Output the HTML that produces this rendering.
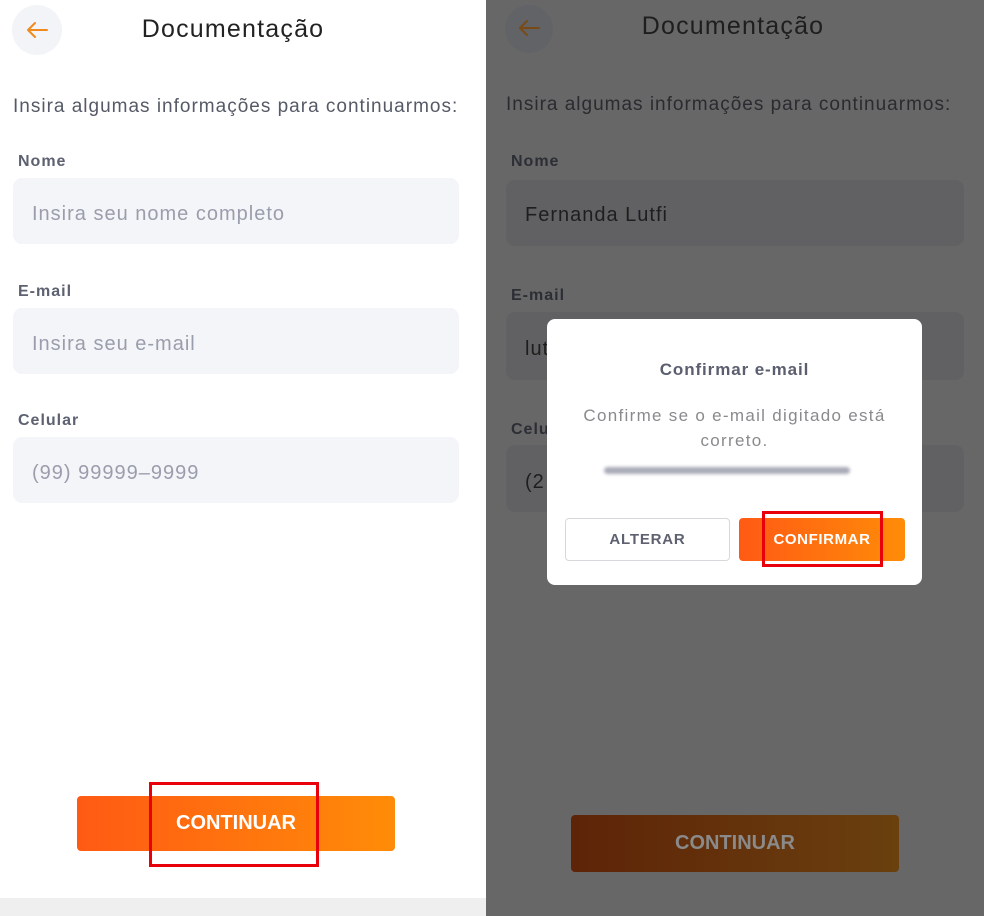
<!DOCTYPE html>
<html><head><meta charset="utf-8"><style>
*{margin:0;padding:0;box-sizing:border-box}
body{width:984px;height:916px;position:relative;overflow:hidden;background:#fff;font-family:"Liberation Sans",sans-serif}
.a{position:absolute}
.t{white-space:nowrap}
.field{position:absolute;border-radius:9px}
.ls{letter-spacing:1px}
</style></head><body>
<!-- left -->
<div class="a" style="left:12px;top:5px;width:50px;height:50px;border-radius:50%;background:#f3f4f8"></div>
<svg class="a" style="left:25px;top:20px" width="24" height="20" viewBox="0 0 24 20"><path d="M22 10H3M10 3L3 10l7 7" stroke="#f08a1c" stroke-width="2" fill="none" stroke-linecap="round" stroke-linejoin="round"/></svg>
<div class="a t" style="left:0;width:466px;text-align:center;top:15px;font-size:25px;color:#222;letter-spacing:1.2px">Documentação</div>
<div class="a t ls" style="left:13px;top:96px;font-size:19px;color:#555a66">Insira algumas informações para continuarmos:</div>
<div class="a t ls" style="left:18px;top:153px;font-size:16px;font-weight:bold;color:#5d6170">Nome</div>
<div class="field" style="left:13px;top:178px;width:446px;height:66px;background:#f4f5f9"></div>
<div class="a t ls" style="left:32px;top:203px;font-size:20px;color:#9a9dab">Insira seu nome completo</div>
<div class="a t ls" style="left:18px;top:283px;font-size:16px;font-weight:bold;color:#5d6170">E-mail</div>
<div class="field" style="left:13px;top:308px;width:446px;height:66px;background:#f4f5f9"></div>
<div class="a t ls" style="left:32px;top:333px;font-size:20px;color:#9a9dab">Insira seu e-mail</div>
<div class="a t ls" style="left:18px;top:412px;font-size:16px;font-weight:bold;color:#5d6170">Celular</div>
<div class="field" style="left:13px;top:437px;width:446px;height:66px;background:#f4f5f9"></div>
<div class="a t ls" style="left:32px;top:462px;font-size:20px;color:#9a9dab">(99) 99999–9999</div>
<div class="a" style="left:77px;top:796px;width:318px;height:55px;border-radius:4px;background:linear-gradient(90deg,#ff5a14,#ff8c08)"></div>
<div class="a t" style="left:77px;width:318px;text-align:center;top:812px;font-size:20px;font-weight:bold;color:#fff">CONTINUAR</div>
<div class="a" style="left:149px;top:782px;width:170px;height:85px;border:3px solid #e8000a"></div>
<div class="a" style="left:0;top:898px;width:486px;height:18px;background:#efefef"></div>
<!-- right -->
<div class="a" style="left:486px;top:0;width:498px;height:916px;background:#676767"></div>
<div class="a" style="left:505px;top:5px;width:48px;height:48px;border-radius:50%;background:#626366"></div>
<svg class="a" style="left:517px;top:18px" width="24" height="20" viewBox="0 0 24 20"><path d="M22 10H3M10 3L3 10l7 7" stroke="#7a4a16" stroke-width="2" fill="none" stroke-linecap="round" stroke-linejoin="round"/></svg>
<div class="a t" style="left:486px;width:494px;text-align:center;top:12px;font-size:25px;color:#1e1e1e;letter-spacing:1.2px">Documentação</div>
<div class="a t ls" style="left:506px;top:94px;font-size:19px;color:#2a2b30">Insira algumas informações para continuarmos:</div>
<div class="a t ls" style="left:511px;top:153px;font-size:16px;font-weight:bold;color:#2c2e36">Nome</div>
<div class="field" style="left:506px;top:180px;width:458px;height:66px;background:#616163"></div>
<div class="a t ls" style="left:525px;top:204px;font-size:20px;color:#1e1e1e">Fernanda Lutfi</div>
<div class="a t ls" style="left:511px;top:287px;font-size:16px;font-weight:bold;color:#2c2e36">E-mail</div>
<div class="field" style="left:506px;top:312px;width:458px;height:68px;background:#616163"></div>
<div class="a t ls" style="left:525px;top:338px;font-size:20px;color:#1e1e1e">lut</div>
<div class="a t ls" style="left:511px;top:421px;font-size:16px;font-weight:bold;color:#2c2e36">Celular</div>
<div class="field" style="left:506px;top:445px;width:458px;height:67px;background:#616163"></div>
<div class="a t ls" style="left:525px;top:471px;font-size:20px;color:#1e1e1e">(2</div>
<div class="a" style="left:571px;top:815px;width:328px;height:57px;border-radius:4px;background:linear-gradient(90deg,#5e2408,#6a400e)"></div>
<div class="a t" style="left:571px;width:328px;text-align:center;top:832px;font-size:20px;font-weight:bold;color:#8a8a8a">CONTINUAR</div>
<!-- dialog -->
<div class="a" style="left:547px;top:319px;width:375px;height:266px;border-radius:8px;background:#fff"></div>
<div class="a t" style="left:547px;width:375px;text-align:center;top:360px;font-size:17px;font-weight:bold;color:#5b5e6e;letter-spacing:.9px">Confirmar e-mail</div>
<div class="a" style="left:547px;width:375px;text-align:center;top:403px;font-size:17px;line-height:25px;color:#8a8a8e;letter-spacing:1.3px">Confirme se o e-mail digitado está<br>correto.</div>
<div class="a" style="left:604px;top:467px;width:246px;height:7px;border-radius:4px;background:#a9abb8;filter:blur(1.5px)"></div>
<div class="a" style="left:565px;top:518px;width:165px;height:43px;border:1.5px solid #d8d8dc;border-radius:4px;background:#fff"></div>
<div class="a t" style="left:565px;width:165px;text-align:center;top:531px;font-size:15px;font-weight:bold;color:#5d6170;letter-spacing:.8px">ALTERAR</div>
<div class="a" style="left:739px;top:518px;width:166px;height:43px;border-radius:4px;background:linear-gradient(90deg,#ff5a14,#ff8c08)"></div>
<div class="a t" style="left:739px;width:166px;text-align:center;top:531px;font-size:15px;font-weight:bold;color:#fff;letter-spacing:.6px">CONFIRMAR</div>
<div class="a" style="left:762px;top:511px;width:121px;height:56px;border:3px solid #e8000a"></div>
</body></html>
